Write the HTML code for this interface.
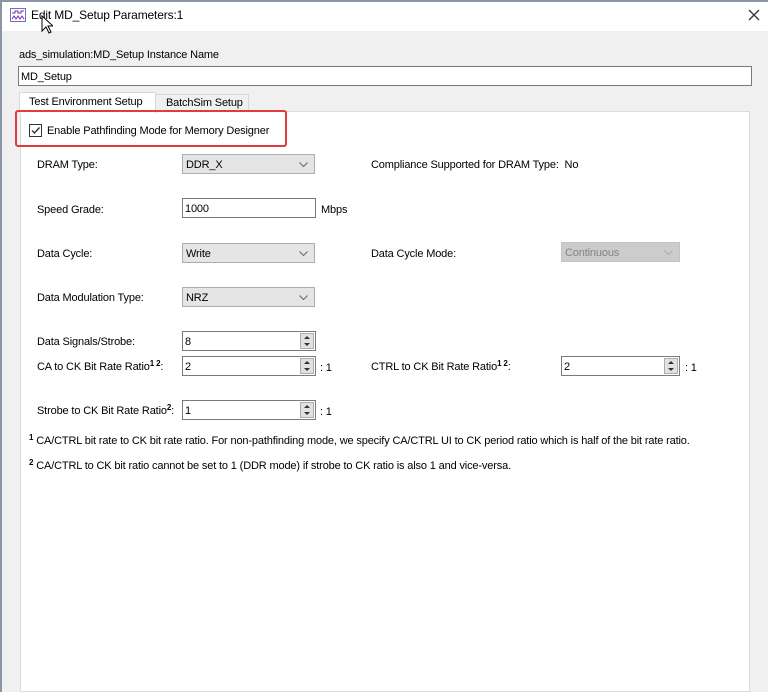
<!DOCTYPE html>
<html><head><style>
*{margin:0;padding:0;box-sizing:border-box}
body{width:768px;height:692px;overflow:hidden;background:#f0f0f0;font-family:"Liberation Sans",Tahoma,sans-serif;font-size:11px;color:#000;position:relative;letter-spacing:-0.15px}
.a{position:absolute;white-space:nowrap}
.t{line-height:13px}
.dd{position:absolute;height:20px;background:#e5e5e5;border:1px solid #adadad;padding:4px 0 0 3px;line-height:13px}
.dd svg{position:absolute;right:6px;top:7px}
.in{position:absolute;height:20px;background:#fff;border:1px solid #7a7a7a;padding:4px 0 0 2px;line-height:13px}
.sp{position:absolute;right:1px;top:1px;width:14px;height:16px;background:#e1e1e1;border:1px solid #adadad}
.sp:before{content:"";position:absolute;left:3px;top:2px;border:3px solid transparent;border-bottom:3px solid #333;border-top:none}
.sp:after{content:"";position:absolute;left:3px;top:9px;border:3px solid transparent;border-top:3px solid #333;border-bottom:none}
sup{font-size:8px;font-weight:bold;vertical-align:4px;line-height:0}
</style></head><body>
<div class="a" style="left:0;top:0;width:768px;height:31px;background:#fff"></div>
<div class="a" style="left:0;top:0;width:768px;height:2px;background:#8a96a6"></div>
<div class="a" style="left:0;top:0;width:2px;height:692px;background:#8a96a6"></div>
<svg class="a" style="left:10px;top:8px" width="16" height="14"><rect x="0.5" y="0.5" width="15" height="13" fill="#fff" stroke="#7070c0"/><path d="M2 5h3v-2h3v2h3v-2h3M2 11l2-3 2 3 2-3 2 3 2-3 2 3" stroke="#7030a0" fill="none"/></svg>
<div class="a t" style="left:31px;top:9px;font-size:12px">Edit MD_Setup Parameters:1</div>
<svg class="a" style="left:41px;top:15px" width="12" height="20"><path d="M1 1v15l4-4 3 6 2-1-3-6h5z" fill="#fff" stroke="#000"/></svg>
<svg class="a" style="left:748px;top:9px" width="12" height="12"><path d="M1 1l10 10M11 1l-10 10" stroke="#333" stroke-width="1.3"/></svg>
<div class="a t" style="left:19px;top:49px">ads_simulation:MD_Setup Instance Name</div>
<div class="in" style="left:18px;top:66px;width:734px">MD_Setup</div>
<div class="a" style="left:20px;top:111px;width:730px;height:581px;background:#fff;border:1px solid #dcdcdc"></div>
<div class="a" style="left:155px;top:94px;width:94px;height:18px;background:#f0f0f0;border:1px solid #d9d9d9"></div>
<div class="a t" style="left:166px;top:97px">BatchSim Setup</div>
<div class="a" style="left:19px;top:92px;width:137px;height:21px;background:#fff;border:1px solid #d9d9d9;border-bottom:none"></div>
<div class="a t" style="left:29px;top:96px">Test Environment Setup</div>
<div class="a" style="left:15px;top:110px;width:272px;height:37px;border:2px solid #e03c3c;border-radius:3px"></div>
<div class="a" style="left:29px;top:124px;width:13px;height:13px;border:1px solid #333;background:#fff"></div>
<svg class="a" style="left:30px;top:125px" width="11" height="11"><path d="M2 5.5l2.5 2.5 5-5.5" stroke="#333" stroke-width="1.4" fill="none"/></svg>
<div class="a t" style="left:47px;top:125px">Enable Pathfinding Mode for Memory Designer</div>

<div class="a t" style="left:37px;top:159px">DRAM Type:</div>
<div class="dd" style="left:182px;top:154px;width:133px">DDR_X<svg width="9" height="6"><path d="M0.5 .5l4 4 4-4" stroke="#666" fill="none"/></svg></div>
<div class="a t" style="left:371px;top:159px">Compliance Supported for DRAM Type:&nbsp; No</div>

<div class="a t" style="left:37px;top:204px">Speed Grade:</div>
<div class="in" style="left:182px;top:198px;width:134px">1000</div>
<div class="a t" style="left:321px;top:204px">Mbps</div>

<div class="a t" style="left:37px;top:248px">Data Cycle:</div>
<div class="dd" style="left:182px;top:243px;width:133px">Write<svg width="9" height="6"><path d="M0.5 .5l4 4 4-4" stroke="#666" fill="none"/></svg></div>
<div class="a t" style="left:371px;top:248px">Data Cycle Mode:</div>
<div class="dd" style="left:561px;top:242px;width:119px;background:#cccccc;border-color:#c4c4c4;color:#838383">Continuous<svg width="9" height="6"><path d="M0.5 .5l4 4 4-4" stroke="#aaa" fill="none"/></svg></div>

<div class="a t" style="left:37px;top:292px">Data Modulation Type:</div>
<div class="dd" style="left:182px;top:287px;width:133px">NRZ<svg width="9" height="6"><path d="M0.5 .5l4 4 4-4" stroke="#666" fill="none"/></svg></div>

<div class="a t" style="left:37px;top:336px">Data Signals/Strobe:</div>
<div class="in" style="left:182px;top:331px;width:134px">8<div class="sp"></div></div>
<div class="a t" style="left:37px;top:361px">CA to CK Bit Rate Ratio<sup>1 2</sup>:</div>
<div class="in" style="left:182px;top:356px;width:134px">2<div class="sp"></div></div>
<div class="a t" style="left:320px;top:362px">: 1</div>
<div class="a t" style="left:371px;top:361px">CTRL to CK Bit Rate Ratio<sup>1 2</sup>:</div>
<div class="in" style="left:561px;top:356px;width:119px">2<div class="sp"></div></div>
<div class="a t" style="left:685px;top:362px">: 1</div>

<div class="a t" style="left:37px;top:405px">Strobe to CK Bit Rate Ratio<sup>2</sup>:</div>
<div class="in" style="left:182px;top:400px;width:134px">1<div class="sp"></div></div>
<div class="a t" style="left:320px;top:406px">: 1</div>

<div class="a t" style="left:29px;top:435px"><sup>1</sup> CA/CTRL bit rate to CK bit rate ratio. For non-pathfinding mode, we specify CA/CTRL UI to CK period ratio which is half of the bit rate ratio.</div>
<div class="a t" style="left:29px;top:460px"><sup>2</sup> CA/CTRL to CK bit ratio cannot be set to 1 (DDR mode) if strobe to CK ratio is also 1 and vice-versa.</div>
</body></html>
